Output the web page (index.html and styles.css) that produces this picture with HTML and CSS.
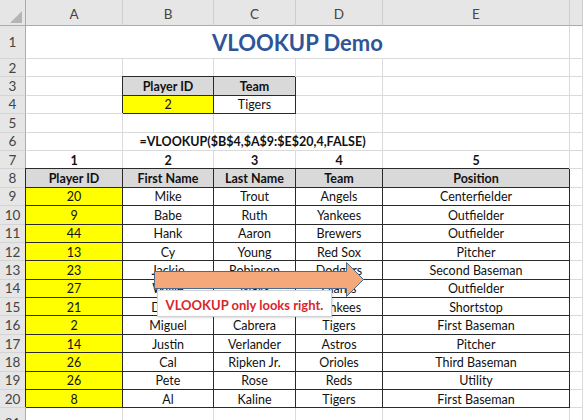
FILE: index.html
```html
<!DOCTYPE html>
<html>
<head>
<meta charset="utf-8">
<link rel="stylesheet" href="styles.css">
</head>
<body>
<div class="sheet">
  <div class="grid">
    <div class="corner"><span class="tri"></span></div>
    <div class="ch">A</div><div class="ch">B</div><div class="ch">C</div><div class="ch">D</div><div class="ch">E</div><div class="ch"></div>

    <div class="rh">1</div><div class="c title">VLOOKUP Demo</div><div class="c"></div>

    <div class="rh">2</div><div class="c"></div><div class="c"></div><div class="c"></div><div class="c"></div><div class="c"></div><div class="c"></div>

    <div class="rh">3</div><div class="c"></div><div class="c b h">Player ID</div><div class="c b h">Team</div><div class="c"></div><div class="c"></div><div class="c"></div>

    <div class="rh">4</div><div class="c"></div><div class="c b y">2</div><div class="c b">Tigers</div><div class="c"></div><div class="c"></div><div class="c"></div>

    <div class="rh">5</div><div class="c"></div><div class="c"></div><div class="c"></div><div class="c"></div><div class="c"></div><div class="c"></div>

    <div class="rh">6</div><div class="c"></div><div class="c formula">=VLOOKUP($B$4,$A$9:$E$20,4,FALSE)</div><div class="c"></div><div class="c"></div>

    <div class="rh">7</div><div class="c bold">1</div><div class="c bold">2</div><div class="c bold">3</div><div class="c bold">4</div><div class="c bold">5</div><div class="c"></div>

    <div class="rh">8</div><div class="c b h">Player ID</div><div class="c b h">First Name</div><div class="c b h">Last Name</div><div class="c b h">Team</div><div class="c b h">Position</div><div class="c"></div>

    <div class="rh">9</div><div class="c b y">20</div><div class="c b">Mike</div><div class="c b">Trout</div><div class="c b">Angels</div><div class="c b">Centerfielder</div><div class="c"></div>

    <div class="rh">10</div><div class="c b y">9</div><div class="c b">Babe</div><div class="c b">Ruth</div><div class="c b">Yankees</div><div class="c b">Outfielder</div><div class="c"></div>

    <div class="rh">11</div><div class="c b y">44</div><div class="c b">Hank</div><div class="c b">Aaron</div><div class="c b">Brewers</div><div class="c b">Outfielder</div><div class="c"></div>

    <div class="rh">12</div><div class="c b y">13</div><div class="c b">Cy</div><div class="c b">Young</div><div class="c b">Red Sox</div><div class="c b">Pitcher</div><div class="c"></div>

    <div class="rh">13</div><div class="c b y">23</div><div class="c b">Jackie</div><div class="c b">Robinson</div><div class="c b">Dodgers</div><div class="c b">Second Baseman</div><div class="c"></div>

    <div class="rh">14</div><div class="c b y">27</div><div class="c b">Willie</div><div class="c b">Mays</div><div class="c b">Giants</div><div class="c b">Outfielder</div><div class="c"></div>

    <div class="rh">15</div><div class="c b y">21</div><div class="c b">Derek</div><div class="c b">Jeter</div><div class="c b">Yankees</div><div class="c b">Shortstop</div><div class="c"></div>

    <div class="rh">16</div><div class="c b y">2</div><div class="c b">Miguel</div><div class="c b">Cabrera</div><div class="c b">Tigers</div><div class="c b">First Baseman</div><div class="c"></div>

    <div class="rh">17</div><div class="c b y">14</div><div class="c b">Justin</div><div class="c b">Verlander</div><div class="c b">Astros</div><div class="c b">Pitcher</div><div class="c"></div>

    <div class="rh">18</div><div class="c b y">26</div><div class="c b">Cal</div><div class="c b">Ripken Jr.</div><div class="c b">Orioles</div><div class="c b">Third Baseman</div><div class="c"></div>

    <div class="rh">19</div><div class="c b y">26</div><div class="c b">Pete</div><div class="c b">Rose</div><div class="c b">Reds</div><div class="c b">Utility</div><div class="c"></div>

    <div class="rh">20</div><div class="c b y">8</div><div class="c b">Al</div><div class="c b">Kaline</div><div class="c b">Tigers</div><div class="c b">First Baseman</div><div class="c"></div>

    <div class="rh">21</div><div class="c"></div><div class="c"></div><div class="c"></div><div class="c"></div><div class="c"></div><div class="c"></div>
  </div>

  <div class="callout">VLOOKUP only looks right.</div>
  <svg class="arrow" width="220" height="40" viewBox="0 0 220 40">
    <path d="M0.5 9.5 H192.5 V0.5 L209.5 17.5 L192.5 34.5 V26.5 H0.5 Z" fill="#f5a97a" stroke="#4a6b8f" stroke-width="1"/>
  </svg>
</div>
</body>
</html>
```

FILE: styles.css
```css
html, body {
  margin: 0;
  padding: 0;
  background: #ffffff;
}

.sheet {
  position: relative;
  width: 583px;
  height: 420px;
  overflow: hidden;
  font-family: "Lato", "Liberation Sans", sans-serif;
  font-size: 12.5px;
  color: #111;
}

.grid {
  display: grid;
  grid-template-columns: 26px 97px 91px 82px 87px 187px 1fr;
  grid-template-rows: 26px 33px repeat(19, 18.4px) 30px;
}

.corner {
  position: relative;
  background: #e6e6e6;
  border-right: 1px solid #ababab;
  border-bottom: 1px solid #ababab;
  box-sizing: border-box;
}

.tri {
  position: absolute;
  right: 3px;
  bottom: 2px;
  width: 0;
  height: 0;
  border-left: 12px solid transparent;
  border-bottom: 12px solid #b5b5b5;
}

.ch {
  background: #e6e6e6;
  color: #444;
  font-size: 13.5px;
  border-right: 1px solid #cdcdcd;
  border-bottom: 1px solid #ababab;
  box-sizing: border-box;
  display: flex;
  align-items: center;
  justify-content: center;
  padding-top: 2px;
}

.rh {
  background: #e6e6e6;
  color: #444;
  font-size: 13.5px;
  border-right: 1px solid #ababab;
  border-bottom: 1px solid #d4d4d4;
  box-sizing: border-box;
  display: flex;
  align-items: center;
  justify-content: center;
}

.c {
  border-right: 1px solid #dadada;
  border-bottom: 1px solid #dadada;
  box-sizing: border-box;
  display: flex;
  align-items: center;
  justify-content: center;
  white-space: nowrap;
  background: #fff;
  padding-top: 1px;
}

.title {
  grid-column: span 5;
  font-size: 22px;
  font-weight: 700;
  color: #2f5597;
}

.formula {
  grid-column: span 3;
  font-weight: 700;
}

.bold {
  font-weight: 700;
}

.b {
  border-right-color: #2a2a2a;
  border-bottom-color: #2a2a2a;
  box-shadow: -1px -1px 0 0 #2a2a2a;
}

.h {
  background: #d9d9d9;
  font-weight: 700;
}

.y {
  background: #ffff00;
}

.callout {
  position: absolute;
  left: 157px;
  top: 290px;
  width: 175px;
  height: 27px;
  box-sizing: border-box;
  background: #fff;
  border: 1px solid #d0d0d0;
  box-shadow: 1px 1px 2px rgba(0,0,0,0.15);
  color: #d8262b;
  font-weight: 700;
  font-size: 13px;
  display: flex;
  align-items: center;
  justify-content: center;
  padding-top: 3px;
}

.arrow {
  position: absolute;
  left: 154px;
  top: 262px;
}
```
